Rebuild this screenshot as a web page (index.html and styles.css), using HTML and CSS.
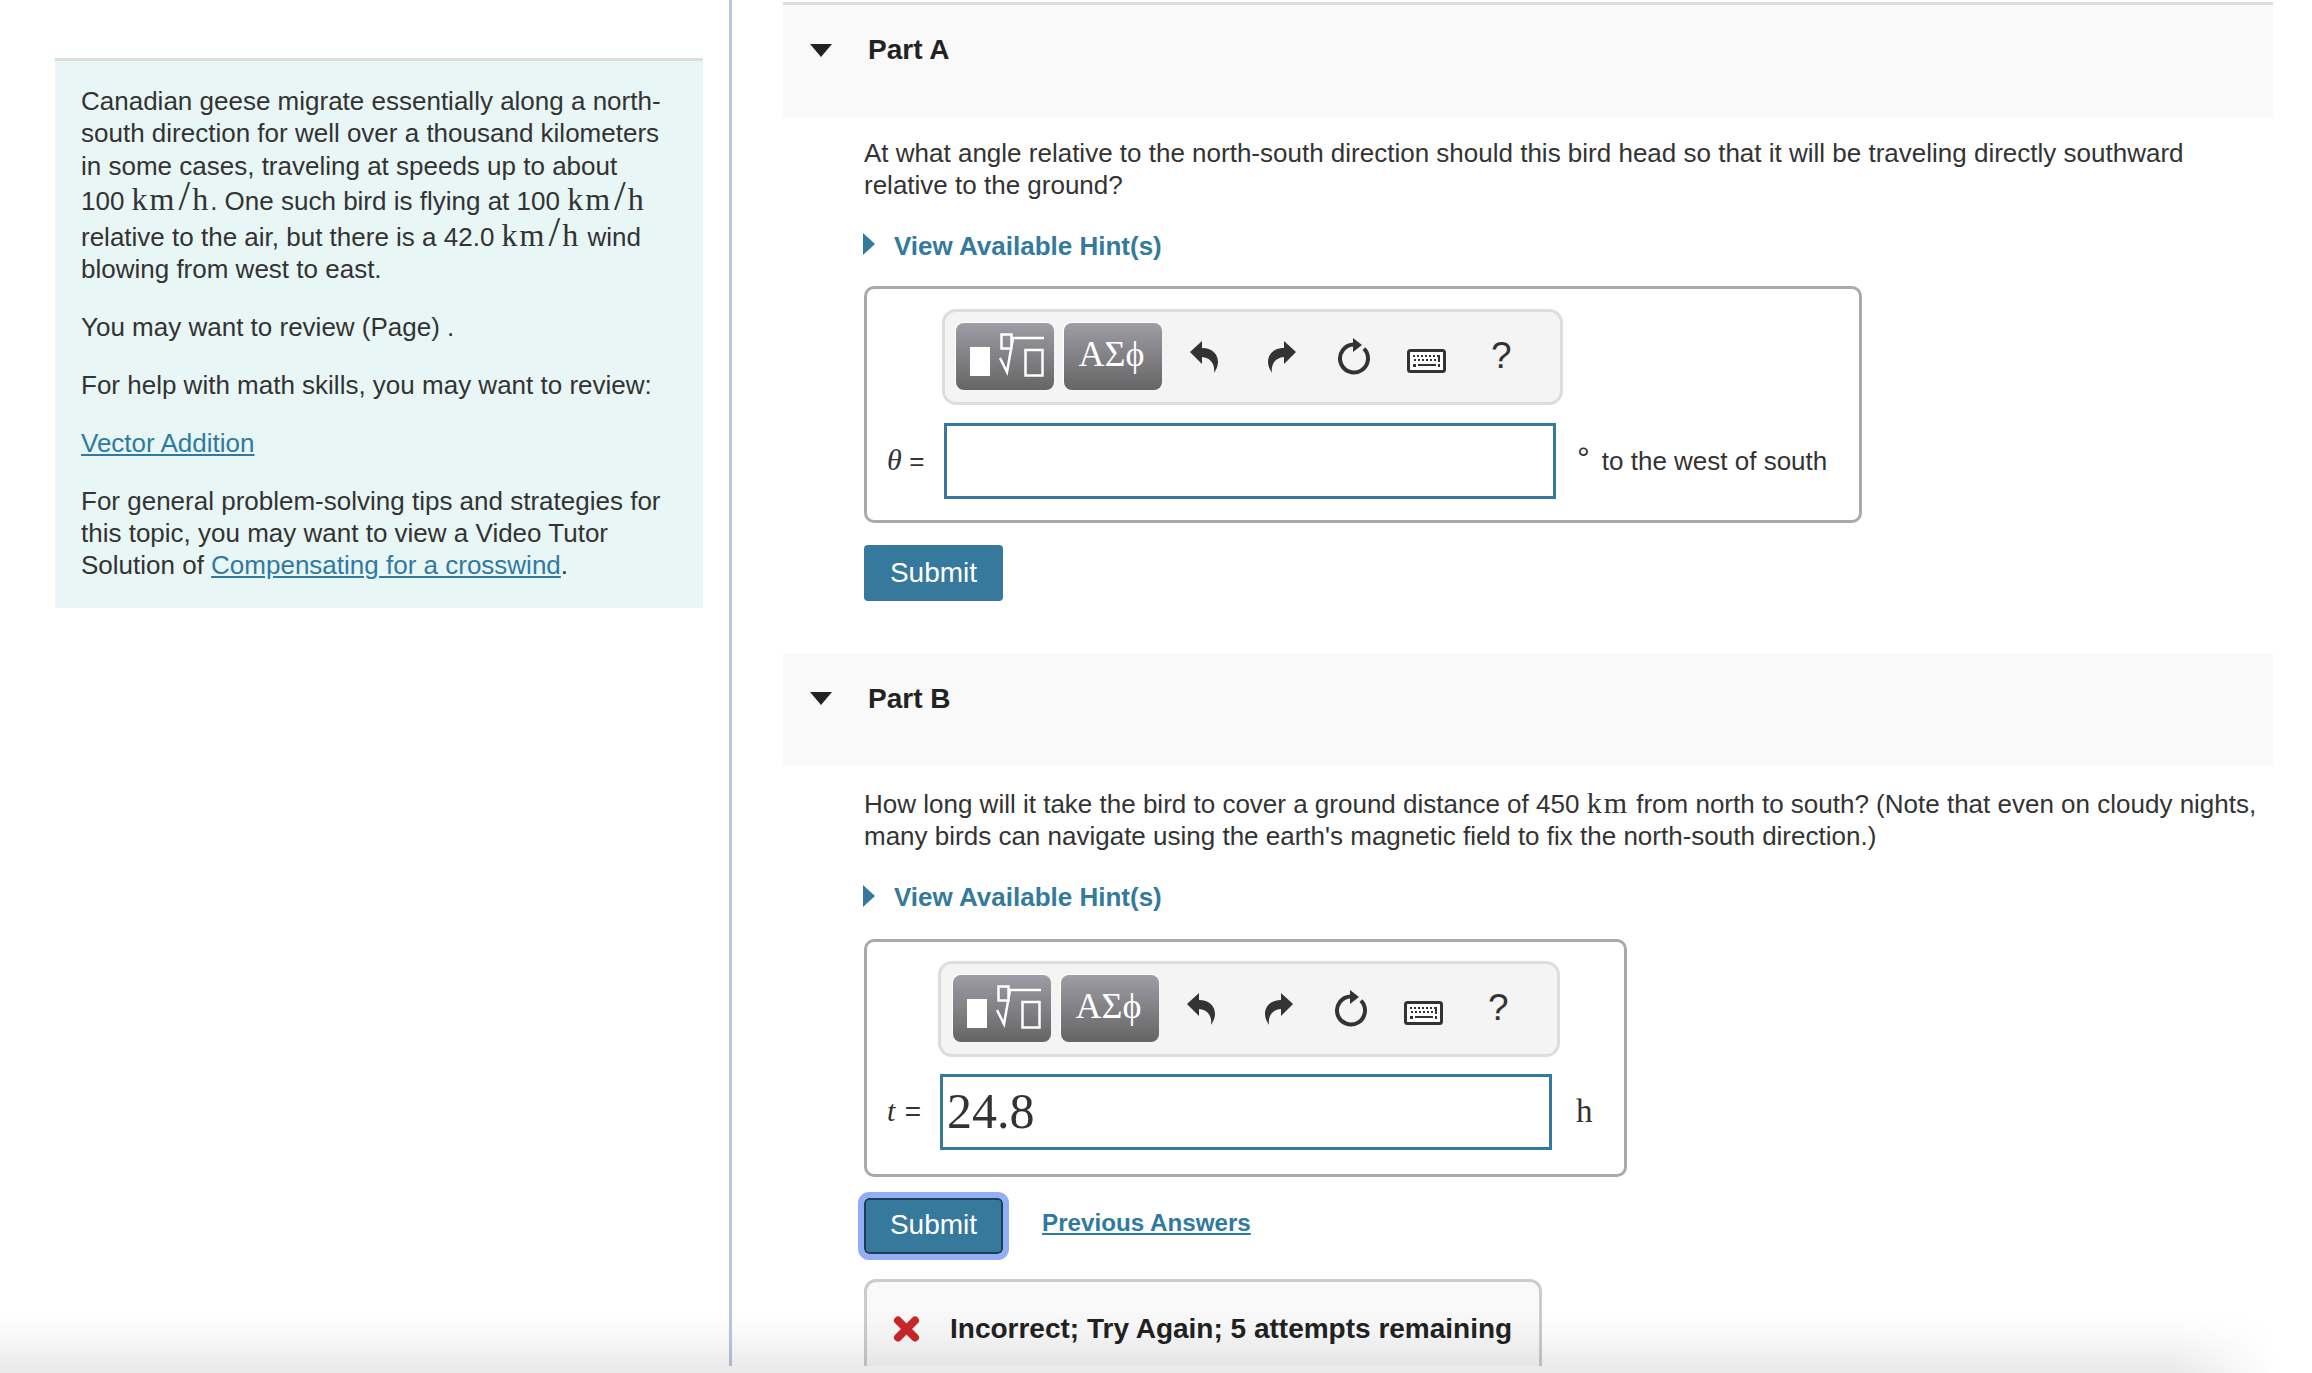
FILE: index.html
```html
<!DOCTYPE html>
<html lang="en">
<head>
<meta charset="utf-8">
<title>Part A and Part B</title>
<link rel="stylesheet" href="styles.css">
</head>
<body>
<svg class="defs" width="0" height="0" aria-hidden="true">
  <symbol id="i-undo" viewBox="0 0 28 32"><path d="M0 11 12 0V7C22 7 28 13 28 21 28 25 26 29 24 32 25 26 23 17 12 16V23Z"/></symbol>
  <symbol id="i-redo" viewBox="0 0 28 32"><path d="M28 11 16 0V7C6 7 0 13 0 21 0 25 2 29 4 32 3 26 5 17 16 16V23Z"/></symbol>
  <symbol id="i-reload" viewBox="0 0 34 37"><path d="M17 6.500A14 14 0 1 0 26.900 10.600" fill="none" stroke="#333" stroke-width="4"/><path d="M16 0 25 7 16 14Z"/></symbol>
  <symbol id="i-keys" viewBox="0 0 39 24"><rect x="1.500" y="1.500" width="36" height="21" rx="2" fill="#fff" stroke="#333" stroke-width="3"/><path d="M6 6h2v2H6zM10 6h2v2h-2zM14 6h2v2h-2zM18 6h2v2h-2zM22 6h2v2h-2zM26 6h2v2h-2zM30 6h3v7h-2V8h-1zM7 10h2v2H7zM11 10h2v2h-2zM15 10h2v2h-2zM19 10h2v2h-2zM23 10h2v2h-2zM27 10h2v2h-2zM6 15h3v3H6zM11 15h18v2H11zM31 15h2v3h-2z"/></symbol>
  <symbol id="i-templates" viewBox="0 0 98 67"><path d="M14 24h20v29H14z" fill="#fff"/><path d="M45.500 11.500h10v14h-10zM69.500 27h17v25.500h-17zM44 35l7 14 6-34h31" fill="none" stroke="#fff" stroke-width="2.500"/></symbol>
</svg>
<div class="page">
  <aside class="sidebar">
    <div class="intro">
      <p>Canadian geese migrate essentially along a north-south direction for well over a thousand kilometers in some cases, traveling at speeds up to about<br>100&nbsp;<span class="unit">km<i>/</i>h</span>. One such bird is flying at 100&nbsp;<span class="unit">km<i>/</i>h</span> relative to the air, but there is a 42.0&nbsp;<span class="unit">km<i>/</i>h</span> wind blowing from west to east.</p>
      <p>You may want to review (Page) .</p>
      <p>For help with math skills, you may want to review:</p>
      <p><a href="#">Vector Addition</a></p>
      <p>For general problem-solving tips and strategies for this topic, you may want to view a Video Tutor Solution of <a href="#">Compensating for a crosswind</a>.</p>
    </div>
  </aside>
  <main class="main">
    <section class="part part-a">
      <header class="part-head"><span class="caret"></span><h2>Part A</h2></header>
      <div class="part-body">
        <p class="question">At what angle relative to the north-south direction should this bird head so that it will be traveling directly southward relative to the ground?</p>
        <div class="hint"><span class="hint-caret"></span>View Available Hint(s)</div>
        <div class="answer answer-a">
          <div class="toolbar">
            <button class="tool tool-tpl"><svg class="ico-tpl"><use href="#i-templates"/></svg></button>
            <button class="tool tool-sym">ΑΣϕ</button>
            <svg class="ico ico-undo"><use href="#i-undo"/></svg>
            <svg class="ico ico-redo"><use href="#i-redo"/></svg>
            <svg class="ico ico-reload"><use href="#i-reload"/></svg>
            <svg class="ico ico-keys"><use href="#i-keys"/></svg>
            <span class="help">?</span>
          </div>
          <div class="entry">
            <span class="var"><i>θ</i> <span class="eq">=</span></span>
            <div class="field"></div>
            <span class="deg">°</span><span class="suffix">to the west of south</span>
          </div>
        </div>
        <button class="submit">Submit</button>
      </div>
    </section>
    <section class="part part-b">
      <header class="part-head"><span class="caret"></span><h2>Part B</h2></header>
      <div class="part-body">
        <p class="question">How long will it take the bird to cover a ground distance of 450&nbsp;<span class="unit unit-small">km</span> from north to south? (Note that even on cloudy nights, many birds can navigate using the earth's magnetic field to fix the north-south direction.)</p>
        <div class="hint"><span class="hint-caret"></span>View Available Hint(s)</div>
        <div class="answer answer-b">
          <div class="toolbar">
            <button class="tool tool-tpl"><svg class="ico-tpl"><use href="#i-templates"/></svg></button>
            <button class="tool tool-sym">ΑΣϕ</button>
            <svg class="ico ico-undo"><use href="#i-undo"/></svg>
            <svg class="ico ico-redo"><use href="#i-redo"/></svg>
            <svg class="ico ico-reload"><use href="#i-reload"/></svg>
            <svg class="ico ico-keys"><use href="#i-keys"/></svg>
            <span class="help">?</span>
          </div>
          <div class="entry">
            <span class="var"><i>t</i> <span class="eq">=</span></span>
            <div class="field field-value">24.8</div>
            <span class="suffix-h">h</span>
          </div>
        </div>
        <div class="actions">
          <button class="submit submit-focus">Submit</button>
          <a class="prev" href="#">Previous Answers</a>
        </div>
        <div class="feedback">
          <svg class="ico-x" viewBox="0 0 27 26"><path d="M5 4.500 22 21.500M22 4.500 5 21.500" fill="none" stroke="#c9282a" stroke-width="8" stroke-linecap="round"/></svg>
          <strong>Incorrect; Try Again; 5 attempts remaining</strong>
        </div>
      </div>
    </section>
  </main>
</div>
<div class="fade"></div>
</body>
</html>
```

FILE: styles.css
```css
* { box-sizing: border-box; }
html, body { margin: 0; height: 100%; }
body {
  width: 2312px;
  height: 1373px;
  overflow: hidden;
  background: #fff;
  color: #333;
  font-family: "Liberation Sans", Arial, sans-serif;
  font-size: 26px;
  line-height: 32.4px;
  position: relative;
}
.defs { position: absolute; }
.page { display: flex; height: 1366px; overflow: hidden; }
.sidebar {
  flex: 0 0 732px;
  border-right: 3px solid #b9c9dc;
  padding: 58px 26px 0 55px;
}
.intro {
  background: #e8f6f6;
  border-top: 3px solid #ddd;
  padding: 24px 26px 18px;
  height: 550px;
}
.intro p { margin: 0 0 25.500px; }
.intro p:last-child { margin-bottom: 0; }
a { color: #2f7a9e; }
.unit {
  font-family: "Liberation Serif", serif;
  font-size: 32px;
  letter-spacing: 2px;
  line-height: 34px;
}
.unit i { font-style: normal; font-size: 42px; line-height: 0; padding: 0 2px; letter-spacing: 0; font-weight: 400; }
.unit-small { font-size: 30px; line-height: 20px; }
.main { flex: 1; padding: 2px 39px 0 51px; }
.part-head {
  display: flex;
  align-items: center;
  background: #f9f9f9;
  padding: 0 0 0 28px;
}
.part-a .part-head { border-top: 3px solid #ddd; height: 115px; padding-bottom: 22px; }
.part-b { margin-top: 52px; }
.part-b .part-head { height: 113px; padding-bottom: 21px; }
.caret {
  width: 0; height: 0;
  border-left: 11px solid transparent;
  border-right: 11px solid transparent;
  border-top: 13px solid #222;
  margin: 0 35px 0 -1px;
}
h2 { margin: 0 0 0 1px; font-size: 28px; font-weight: 700; color: #222; }
.part-body { padding-left: 81px; }
.question { margin: 0; padding-right: 14px; }
.part-a .question { padding-top: 20px; }
.part-b .question { padding-top: 22px; }
.hint {
  display: flex;
  align-items: center;
  margin-top: 27px;
  height: 34px;
  font-weight: 700;
  font-size: 26px;
  color: #347a9c;
}
.part-b .hint { margin-top: 28px; }
.hint-caret {
  width: 0; height: 0;
  border-top: 11px solid transparent;
  border-bottom: 11px solid transparent;
  border-left: 12px solid #347a9c;
  margin: -3px 19px 0 -1px;
}
.answer {
  margin-top: 23px;
  border: 3px solid #aaa;
  border-radius: 10px;
  padding: 20px 0 21px 0;
  height: 237px;
}
.answer-a { width: 998px; }
.answer-b { width: 763px; margin-top: 24px; padding-top: 19px; height: 238px; }
.toolbar {
  display: flex;
  align-items: center;
  width: 621px;
  height: 96px;
  padding-left: 11px;
  background: #f4f4f4;
  border: 3px solid #ddd;
  border-radius: 14px;
}
.answer-a .toolbar { margin-left: 75px; }
.answer-b .toolbar { margin-left: 71px; padding-left: 12px; width: 622px; }
.tool {
  width: 98px;
  height: 67px;
  padding: 0;
  border: 0;
  border-radius: 8px;
  background: linear-gradient(#9e9ca5, #656565);
  box-shadow: -1px -1px 0 #fff;
  color: #fff;
  flex: none;
}
.tool-sym {
  margin-left: 10px;
  padding: 0 3px 6px 0;
  font-family: "Liberation Serif", serif;
  font-size: 36px;
  line-height: 1;
}
.ico-tpl { display: block; width: 98px; height: 67px; }
.ico { flex: none; fill: #333; }
.ico-undo { width: 28px; height: 32px; margin-left: 28px; }
.ico-redo { width: 28px; height: 32px; margin-left: 50px; }
.ico-reload { width: 34px; height: 37px; margin-left: 41px; }
.ico-keys { width: 39px; height: 24px; margin: 8px 0 0 36px; }
.help { margin: -2px 0 0 45px; font-size: 37px; line-height: 40px; color: #333; }
.entry { display: flex; align-items: center; margin-top: 18px; height: 76px; }
.answer-b .entry { margin-top: 17px; }
.var {
  flex: none;
  width: 77px;
  padding-left: 20px;
  font-family: "Liberation Serif", serif;
  font-size: 30px;
  white-space: nowrap;
}
.eq { font-family: "Liberation Sans", sans-serif; font-size: 26px; }
.answer-b .var { width: 73px; }
.answer-b .eq { font-size: 28px; margin-left: 2px; }
.field { flex: none; height: 76px; width: 612px; border: 3px solid #347a9c; background: #fff; }
.field-value {
  padding-left: 4px;
  font-family: "Liberation Serif", serif;
  font-size: 50px;
  line-height: 68px;
}
.deg { margin: -6px 0 0 21px; font-size: 32px; }
.suffix { margin-left: 12px; }
.suffix-h { margin-left: 24px; font-family: "Liberation Serif", serif; font-size: 33px; }
.submit {
  display: block;
  margin: 22px 0 0;
  width: 139px;
  height: 56px;
  padding: 0;
  border: 0;
  border-radius: 4px;
  background: #37799c;
  color: #fff;
  font-family: "Liberation Sans", sans-serif;
  font-size: 28px;
}
.actions { display: flex; align-items: center; margin-top: 21px; }
.actions .submit { margin: 0; }
.submit-focus { border: 2px solid #1d3f55; outline: 6px solid #93aef5; border-radius: 5px; padding-bottom: 2px; }
.prev { margin: -4px 0 0 39px; font-weight: 700; font-size: 24.200px; }
.feedback {
  display: flex;
  align-items: center;
  width: 678px;
  height: 120px;
  margin-top: 25px;
  padding: 0 0 18px 26px;
  background: #f9f9f9;
  border: 3px solid #ccc;
  border-radius: 12px;
  color: #222;
}
.ico-x { width: 27px; height: 26px; flex: none; margin: -2px 30px 0 0; }
.feedback strong { font-size: 28px; white-space: nowrap; }
.fade {
  position: absolute;
  left: 0; right: 0; bottom: 0;
  height: 63px;
  background: linear-gradient(rgba(0,0,0,0), rgba(0,0,0,.02) 35%, rgba(0,0,0,.09));
  -webkit-mask-image: linear-gradient(to right, #000 94%, transparent 98.500%);
  mask-image: linear-gradient(to right, #000 94%, transparent 98.500%);
}
```
